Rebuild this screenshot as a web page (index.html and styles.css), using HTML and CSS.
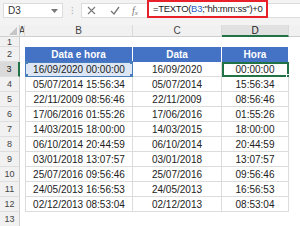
FILE: index.html
```html
<!DOCTYPE html>
<html lang="pt">
<head>
  <meta charset="UTF-8">
  <title>TEXTO hh:mm:ss</title>
  <link rel="stylesheet" href="styles.css">
</head>
<body>
  <div class="toolbar">
    <div class="namebox">
      <span>D3</span>
      <svg class="arrow" width="7" height="4" viewBox="0 0 7 4"><path d="M0 0h7L3.5 4z" fill="#777"/></svg>
    </div>
    <div class="grip">&#8285;</div>
    <div class="fbar">
      <svg class="fbtn" width="9" height="9" viewBox="0 0 9 9"><path d="M1 1l7 7M8 1L1 8" stroke="#777" stroke-width="1.1" fill="none"/></svg>
      <svg class="fbtn" width="10" height="9" viewBox="0 0 10 9"><path d="M1 5l3 3 5-7" stroke="#777" stroke-width="1.3" fill="none"/></svg>
      <span class="fx">f<sub>x</sub></span>
      <span class="formula">=TEXTO(<span class="ref">B3</span>;"hh:mm:ss")+0</span>
    </div>
  </div>

  <div class="sheet" id="sheet">
    <div class="hd corner"><span class="tri"></span></div>
    <div class="hd col">A</div>
    <div class="hd col">B</div>
    <div class="hd col">C</div>
    <div class="hd col sel">D</div>
    <div class="hd col last"></div>

    <div class="rn">1</div>
    <div></div><div></div><div></div><div></div><div></div>

    <div class="rn">2</div>
    <div></div>
    <div class="th">Data e hora</div>
    <div class="th">Data</div>
    <div class="th">Hora</div>
    <div></div>
  </div>

  <script>
    const rows = [
      ['16/09/2020', '00:00:00'],
      ['05/07/2014', '15:56:34'],
      ['22/11/2009', '08:56:46'],
      ['17/06/2016', '01:55:26'],
      ['14/03/2015', '18:00:00'],
      ['06/10/2014', '20:44:59'],
      ['03/01/2018', '13:07:57'],
      ['25/07/2016', '09:56:46'],
      ['24/05/2013', '16:56:53'],
      ['02/12/2013', '08:53:04']
    ];

    const sheet = document.getElementById('sheet');
    let html = '';
    rows.forEach(function (r, i) {
      const first = i === 0;
      html += '<div class="rn' + (first ? ' cur' : '') + '">' + (i + 3) + '</div>';
      html += '<div></div>';
      html += '<div class="td' + (first ? ' ref-cell' : '') + '">' + r[0] + ' ' + r[1] +
        (first ? '<i class="h tl"></i><i class="h tr"></i><i class="h bl"></i><i class="h br"></i>' : '') + '</div>';
      html += '<div class="td">' + r[0] + '</div>';
      html += '<div class="td' + (first ? ' active' : '') + '">' + r[1] + (first ? '<i class="fill"></i>' : '') + '</div>';
      html += '<div></div>';
    });
    html += '<div class="rn">13</div><div></div><div></div><div></div><div></div><div></div>';
    sheet.insertAdjacentHTML('beforeend', html);
  </script>
</body>
</html>
```

FILE: styles.css
```css
body {
  margin: 0;
  width: 300px;
  height: 226px;
  overflow: hidden;
  background: #fff;
  font-family: "Liberation Sans", Arial, sans-serif;
  color: #222;
}

.toolbar {
  height: 25px;
  background: #f3f3f3;
  display: flex;
  align-items: flex-start;
  padding-top: 3px;
  box-sizing: border-box;
}

.namebox {
  width: 60px;
  height: 15px;
  margin-left: 3px;
  box-sizing: border-box;
  background: #fff;
  border: 1px solid #dcdcdc;
  display: flex;
  align-items: center;
  justify-content: space-between;
  padding: 0 4px 0 4px;
  font-size: 10px;
  color: #333;
}

.arrow {
  margin-top: 1px;
}

.grip {
  width: 18px;
  text-align: center;
  font-size: 10px;
  color: #b0b0b0;
  line-height: 15px;
}

.fbar {
  flex: 1;
  height: 15px;
  box-sizing: border-box;
  background: #fff;
  border: 1px solid #dcdcdc;
  border-right: none;
  display: flex;
  align-items: center;
  padding-left: 5px;
}

.fbtn {
  margin-right: 14px;
}

.fx {
  font-family: "Liberation Serif", serif;
  font-style: italic;
  font-size: 10px;
  color: #777;
  margin-left: -2px;
  width: 14px;
}

.fx sub {
  font-size: 7px;
  vertical-align: -1px;
}

.formula {
  margin-left: 1px;
  margin-top: -3px;
  height: 18px;
  padding: 0 3px 0 4px;
  border: 2px solid #e8202a;
  box-sizing: border-box;
  font-size: 9.5px;
  letter-spacing: -0.3px;
  line-height: 14px;
  color: #222;
  background: #fff;
  white-space: nowrap;
}

.ref {
  color: #2a63c6;
}

.sheet {
  display: grid;
  grid-template-columns: 20px 5px 108px 89px 67px 11px;
  grid-template-rows: 12px 10px repeat(12, 15px);
}

.hd {
  background: #f1f1f1;
  border-bottom: 1px solid #cfcfcf;
  border-right: 1px solid #dadada;
  font-size: 10px;
  color: #444;
  display: flex;
  align-items: center;
  justify-content: center;
  overflow: hidden;
}

.corner {
  position: relative;
  border-right-color: #cfcfcf;
}

.tri {
  position: absolute;
  right: 2px;
  bottom: 1px;
  width: 0;
  height: 0;
  border-left: 8px solid transparent;
  border-bottom: 8px solid #c6c6c6;
}

.hd.sel {
  background: #e1e1e1;
  border-bottom: 2px solid #217346;
  color: #222;
}

.hd.last {
  border-right: none;
}

.rn {
  background: #f1f1f1;
  border-right: 1px solid #cfcfcf;
  border-bottom: 1px solid #dedede;
  font-size: 9px;
  color: #444;
  display: flex;
  align-items: center;
  justify-content: center;
}

.rn.cur {
  background: #dadada;
  border-right: 2px solid #217346;
  color: #222;
}

.th {
  background: #4472c4;
  color: #fff;
  font-weight: bold;
  font-size: 10px;
  display: flex;
  align-items: center;
  justify-content: center;
  border-right: 1px solid #fff;
}

.td {
  font-size: 10px;
  color: #222;
  display: flex;
  align-items: center;
  justify-content: center;
  border-right: 1px solid #dcdcdc;
  border-bottom: 1px solid #dcdcdc;
  position: relative;
  white-space: nowrap;
}

.sheet > .td:nth-child(6n+3) {
  border-left: 1px solid #dcdcdc;
}

.ref-cell {
  background: #dce6f4;
  outline: 1px solid #4a7ebb;
  outline-offset: -1px;
}

.h {
  position: absolute;
  width: 3px;
  height: 3px;
  background: #4a7ebb;
}

.tl { left: -1px; top: -1px; }
.tr { right: -1px; top: -1px; }
.bl { left: -1px; bottom: -1px; }
.br { right: -1px; bottom: -1px; }

.active {
  outline: 2px solid #217346;
  outline-offset: -2px;
}

.fill {
  position: absolute;
  right: -2px;
  bottom: -2px;
  width: 4px;
  height: 4px;
  background: #217346;
  border: 1px solid #fff;
  box-sizing: border-box;
}
```
